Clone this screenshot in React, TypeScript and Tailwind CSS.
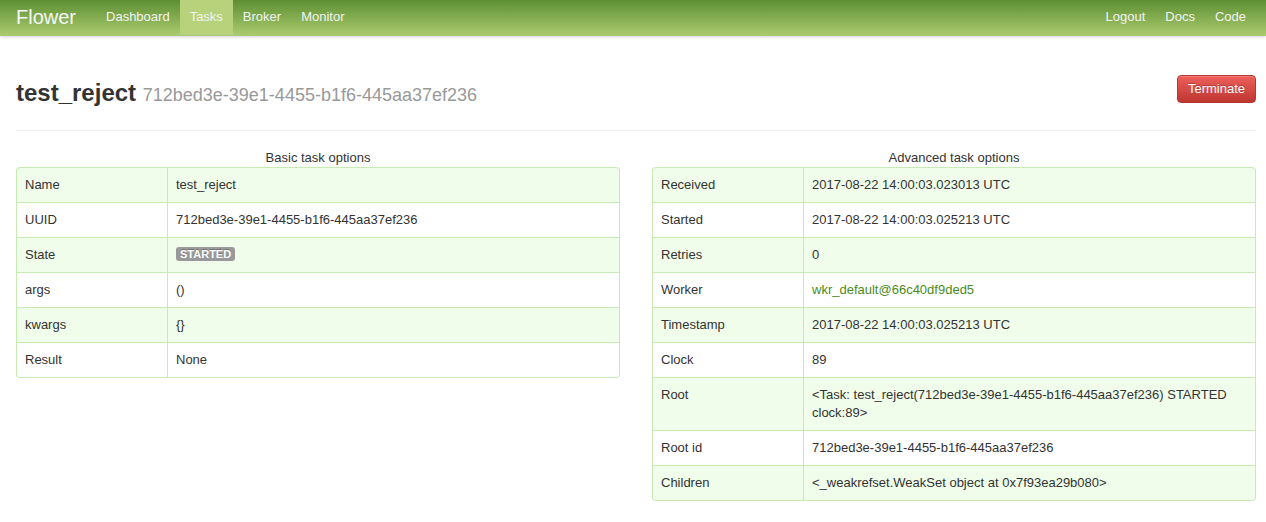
const basic: [string, React.ReactNode][] = [
  ["Name", "test_reject"],
  ["UUID", "712bed3e-39e1-4455-b1f6-445aa37ef236"],
  [
    "State",
    <span className="inline-block rounded-[3px] bg-[#999999] px-[4px] text-[11px] font-bold leading-[14px] text-white align-[1px] [text-shadow:0_-1px_0_rgba(0,0,0,0.25)]">
      STARTED
    </span>,
  ],
  ["args", "()"],
  ["kwargs", "{}"],
  ["Result", "None"],
];

const advanced: [string, React.ReactNode][] = [
  ["Received", "2017-08-22 14:00:03.023013 UTC"],
  ["Started", "2017-08-22 14:00:03.025213 UTC"],
  ["Retries", "0"],
  ["Worker", <a className="text-[#4a8a1c]">wkr_default@66c40df9ded5</a>],
  ["Timestamp", "2017-08-22 14:00:03.025213 UTC"],
  ["Clock", "89"],
  ["Root", "<Task: test_reject(712bed3e-39e1-4455-b1f6-445aa37ef236) STARTED clock:89>"],
  ["Root id", "712bed3e-39e1-4455-b1f6-445aa37ef236"],
  ["Children", "<_weakrefset.WeakSet object at 0x7f93ea29b080>"],
];

function OptionsTable({ caption, rows }: { caption: string; rows: [string, React.ReactNode][] }) {
  return (
    <div className="w-[604px]">
      <div className="h-[19px] text-center leading-[18px] pt-[1px]">{caption}</div>
      <table className="w-full border-separate border-spacing-0 rounded-[4px] border border-[#c6ebb3] border-t-0">
        <tbody>
          {rows.map(([k, v], i) => (
            <tr key={k} className={i % 2 === 0 ? "bg-[#effdea]" : "bg-white"}>
              <td
                className={`w-[150px] border-t border-[#c6ebb3] px-[8px] py-[8px] align-top leading-[18px] ${
                  i === 0 ? "rounded-tl-[4px]" : ""
                } ${i === rows.length - 1 ? "rounded-bl-[4px]" : ""}`}
              >
                {k}
              </td>
              <td
                className={`border-t border-l border-[#c6ebb3] px-[8px] py-[8px] align-top leading-[18px] ${
                  i === 0 ? "rounded-tr-[4px]" : ""
                } ${i === rows.length - 1 ? "rounded-br-[4px]" : ""}`}
              >
                {v}
              </td>
            </tr>
          ))}
        </tbody>
      </table>
    </div>
  );
}

export default function App() {
  const left = ["Dashboard", "Tasks", "Broker", "Monitor"];
  const right = ["Logout", "Docs", "Code"];
  return (
    <div className="min-h-[522px] bg-white font-['Liberation_Sans',Arial,sans-serif] text-[13px] leading-[18px] text-[#333333]">
      <div className="h-[36px] border-b border-[#a8c878] bg-gradient-to-b from-[#5e8f33] to-[#a9cb6d] shadow-[0_1px_3px_rgba(0,0,0,0.18)]">
        <div className="flex h-full items-stretch pl-[16px] pr-[10px] pb-[2px]">
          <div className="mr-[20px] flex items-center text-[20px] font-normal text-[#f6f6f6]">Flower</div>
          {left.map((l) => (
            <div
              key={l}
              className={`-mb-[2px] flex items-center px-[10px] pb-[2px] text-[#f2f2f2] ${l === "Tasks" ? "bg-[#b7d27b]" : ""}`}
            >
              {l}
            </div>
          ))}
          <div className="flex-1" />
          {right.map((l) => (
            <div key={l} className="flex items-center px-[10px] text-[#f2f2f2]">
              {l}
            </div>
          ))}
        </div>
      </div>

      <div className="pl-[16px] pr-[10px]">
        <div className="flex items-start justify-between pt-[37px] pb-[17px] border-b border-[#eeeeee]">
          <h1 className="mt-[2px] text-[24px] font-bold leading-[36px] text-[#333333]">
            test_reject <small className="text-[18px] font-normal text-[#999999]">712bed3e-39e1-4455-b1f6-445aa37ef236</small>
          </h1>
          <button className="mt-[2px] h-[28px] rounded-[4px] border border-[#b33630] bg-gradient-to-b from-[#ee5f5b] to-[#bd362f] px-[10px] leading-[18px] text-white [text-shadow:0_-1px_0_rgba(0,0,0,0.25)] shadow-[inset_0_1px_0_rgba(255,255,255,0.2)]">
            Terminate
          </button>
        </div>

        <div className="mt-[17px] flex justify-between">
          <OptionsTable caption="Basic task options" rows={basic} />
          <OptionsTable caption="Advanced task options" rows={advanced} />
        </div>
      </div>
    </div>
  );
}
